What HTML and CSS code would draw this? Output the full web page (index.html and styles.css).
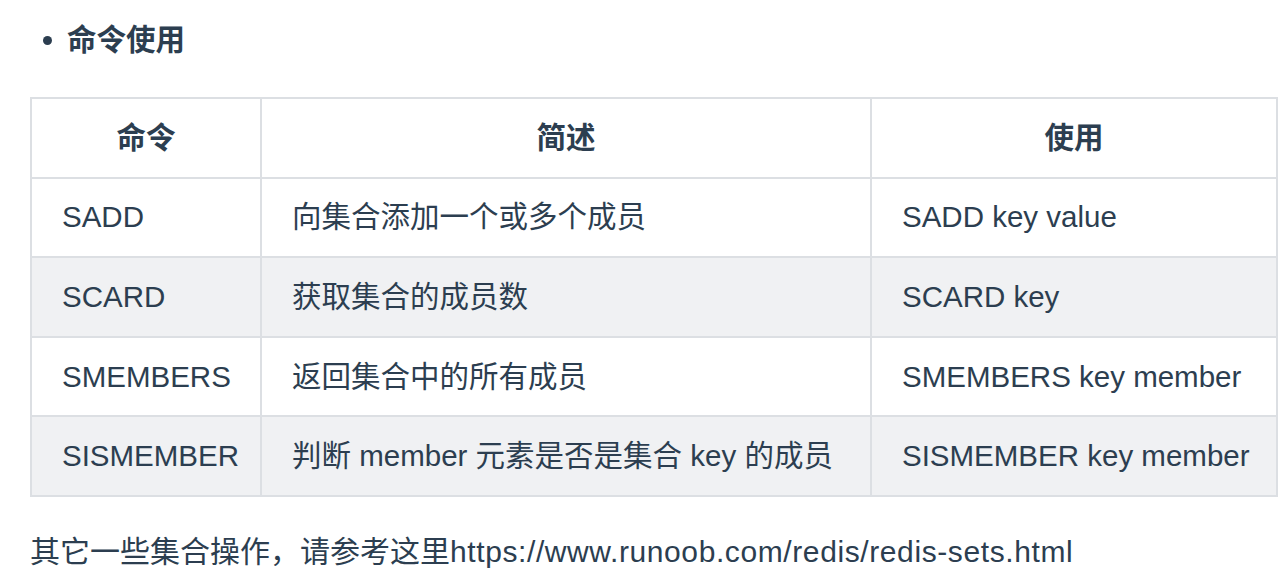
FILE: index.html
```html
<!DOCTYPE html>
<html lang="zh-CN">
<head>
<meta charset="utf-8">
<link rel="stylesheet" href="styles.css">
</head>
<body>
<div class="page">
  <ul class="list">
    <li class="item"><span class="dot"></span><strong>命令使用</strong></li>
  </ul>
  <table class="cmd-table">
    <thead>
      <tr><th class="c1">命令</th><th class="c2">简述</th><th class="c3">使用</th></tr>
    </thead>
    <tbody>
      <tr><td>SADD</td><td>向集合添加一个或多个成员</td><td>SADD key value</td></tr>
      <tr><td>SCARD</td><td>获取集合的成员数</td><td>SCARD key</td></tr>
      <tr><td>SMEMBERS</td><td>返回集合中的所有成员</td><td>SMEMBERS key member</td></tr>
      <tr><td>SISMEMBER</td><td>判断 member 元素是否是集合 key 的成员</td><td>SISMEMBER key member</td></tr>
    </tbody>
  </table>
  <p class="note">其它一些集合操作，请参考这里<span class="url">https://www.runoob.com/redis/redis-sets.html</span></p>
</div>
</body>
</html>
```

FILE: styles.css
```css
html, body {
  margin: 0;
  padding: 0;
  background: #ffffff;
}
.page {
  padding-left: 30px;
  font-family: "Liberation Sans", "Noto Sans CJK SC", sans-serif;
  font-size: 29.5px;
  color: #2c3e50;
}
.list {
  list-style: none;
  margin: 0;
  padding: 20px 0 0 13px;
  height: 97px;
  box-sizing: border-box;
}
.item {
  display: flex;
  align-items: center;
  gap: 15px;
  line-height: 40px;
}
.item strong {
  font-weight: 700;
}
.dot {
  width: 9px;
  height: 9px;
  border-radius: 50%;
  background: #2c3e50;
}
.cmd-table {
  border-collapse: collapse;
  width: 1246px;
  table-layout: fixed;
}
.c1 { width: 230px; }
.c2 { width: 610px; }
.c3 { width: 406px; }
.cmd-table th,
.cmd-table td {
  border: 2px solid #dcdfe3;
  height: 79.6px;
  box-sizing: border-box;
  padding: 0 30px;
  line-height: 40px;
  white-space: nowrap;
}
.cmd-table th {
  font-weight: 700;
  text-align: center;
}
.cmd-table td {
  text-align: left;
}
.cmd-table tbody tr:nth-child(even) {
  background: #f0f1f3;
}
.note {
  margin: 30px 0 0;
  line-height: 50px;
  font-size: 30px;
  white-space: nowrap;
}
.url {
  letter-spacing: 0.6px;
}
```
